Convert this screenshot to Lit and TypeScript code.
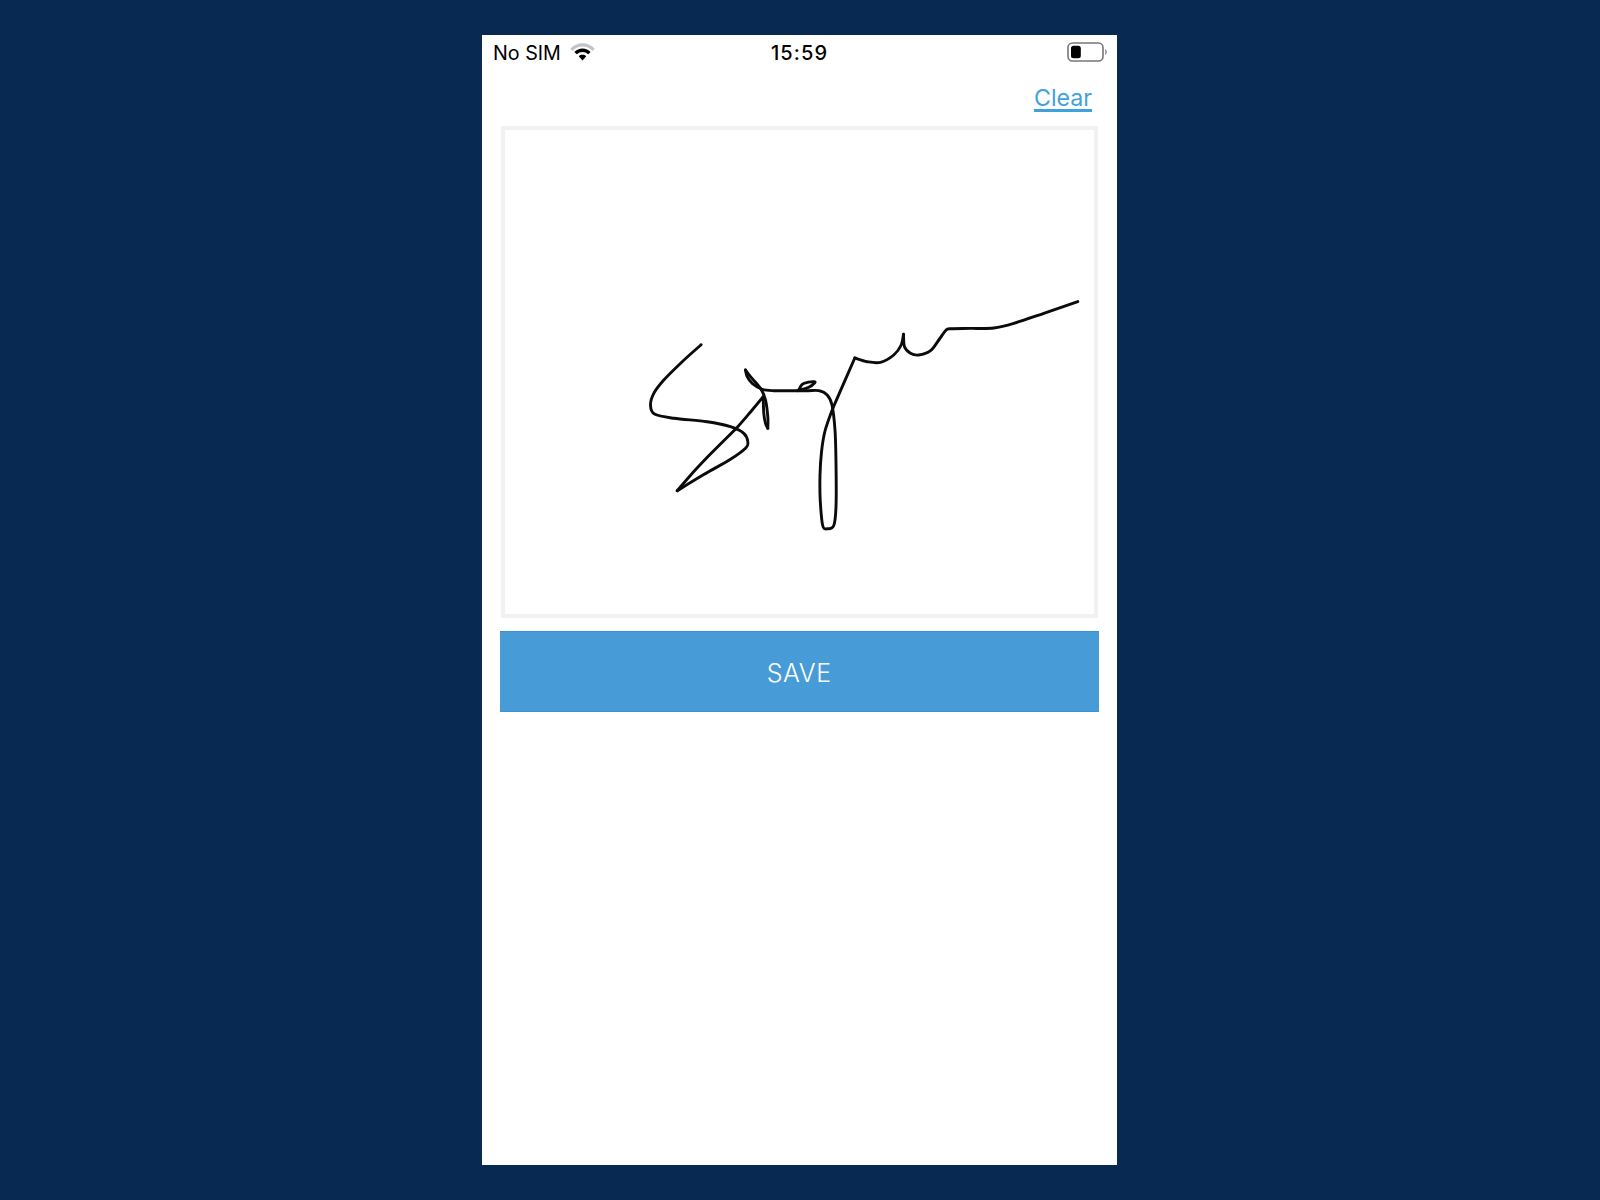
import { LitElement, html, css, svg } from "lit";
import { customElement } from "lit/decorators.js";

type P = [number, number];

const segments: P[][] = [
  [[700.7,344.7],[681.7,361.7],[663.3,380],[653.3,393.3],[650,405],[654,414],[673.3,418.3],[706.7,421.7],[730,426.7],[743.3,433.3],[747.3,441.7],[745,448.3],[730,459.3],[703.3,474.5],[676.7,490.7]],
  [[676.7,490.7],[692,473],[707,457],[722,442],[737,427],[750,412],[762.7,396.7]],
  [[762.7,396.7],[763.3,413.3],[765,423.3],[767.3,428.3]],
  [[767.3,428.3],[767.3,416.7],[765,400],[760,388.3],[750,376.7],[745,370]],
  [[745,370],[746.7,376.7],[751.7,383.3],[761.7,389.3],[773.3,390.7],[785,390.7],[797,390.7]],
  [[798.3,389.8],[801.7,384.3],[808,382.2],[813.3,381.7],[814.3,382.7],[808.3,387.3],[800,390]],
  [[797,390.7],[808,390.7],[818.3,390.7],[826.7,395],[831.5,405],[834.5,430],[835.5,463.3],[835.5,506.7],[833.3,525.5],[826.7,528.8],[822.2,525.5],[819.7,500],[819.5,475],[821,452],[824.5,431],[832.3,408.3]],
  [[832.3,408.3],[854.3,358]],
  [[854.3,358],[866.7,361.7],[880,362.3],[893.3,355],[900.7,345],[903,334.3]],
  [[903,334.3],[904,346.7],[910,353.3],[918.3,355],[930,350.7],[938.3,340],[945,330.7],[950,328.7],[970,328.4],[993.3,328],[1013.3,323.3],[1043.3,313.3],[1077.3,301.6]],
];

function spline(pts: P[]): string {
  let d = "";
  for (let i = 0; i < pts.length - 1; i++) {
    const p0 = pts[Math.max(i - 1, 0)];
    const p1 = pts[i];
    const p2 = pts[i + 1];
    const p3 = pts[Math.min(i + 2, pts.length - 1)];
    const c1: P = [p1[0] + (p2[0] - p0[0]) / 6, p1[1] + (p2[1] - p0[1]) / 6];
    const c2: P = [p2[0] - (p3[0] - p1[0]) / 6, p2[1] - (p3[1] - p1[1]) / 6];
    d += `${i === 0 ? `M${p1[0]} ${p1[1]}` : ""}C${c1[0].toFixed(1)} ${c1[1].toFixed(1)} ${c2[0].toFixed(1)} ${c2[1].toFixed(1)} ${p2[0]} ${p2[1]}`;
  }
  return d;
}

@customElement("app-root")
export class AppRoot extends LitElement {
  static styles = css`
    :host {
      display: flex;
      justify-content: flex-start;
      align-items: flex-start;
      height: 1200px;
      padding-left: 482px;
      box-sizing: border-box;
      background: #082a52;
      font-family: Inter, "Liberation Sans", Arial, sans-serif;
    }
    .phone {
      margin-top: 35px;
      width: 635px;
      height: 1130px;
      background: #fff;
      display: flex;
      flex-direction: column;
    }
    .status {
      height: 34px;
      display: grid;
      grid-template-columns: 1fr auto 1fr;
      align-items: center;
      padding: 1px 9px 0 11px;
      box-sizing: border-box;
      color: #000;
      font-size: 19.7px;
    }
    .left { display: flex; align-items: center; gap: 9px; }
    .wifi { width: 25px; height: 19px; display: block; margin-top: -1px; }
    .time { font-weight: 500; font-size: 20px; letter-spacing: 1.1px; margin-right: 2px; }
    .right { display: flex; justify-content: flex-end; margin-top: -1px; }
    .battery { width: 41px; height: 20px; display: block; }
    .bar {
      height: 57px;
      display: flex;
      justify-content: flex-end;
      align-items: center;
      padding: 0 25px 0 0;
      box-sizing: border-box;
    }
    .clear {
      color: #3fa2dd;
      font-size: 23.2px;
      text-decoration: underline;
      text-decoration-thickness: 2.5px;
      text-underline-offset: 3px;
    }
    .canvas {
      margin: 0 19px;
      height: 492px;
      box-sizing: border-box;
      border: 4px solid #f0f1f1;
      background: #fff;
    }
    .sig { display: block; width: 100%; height: 100%; }
    .sig path { fill: none; stroke: #0b0b0b; stroke-width: 2.9; stroke-linecap: round; stroke-linejoin: round; }
    .save {
      margin: 13px 18.5px 0 18px;
      height: 81px;
      display: flex;
      align-items: center;
      justify-content: center;
      padding-top: 2px;
      background: #479cd8;
      border-top: 1px solid #3a92d4;
      border-bottom: 1px solid #3a92d4;
      box-sizing: border-box;
      color: #fff;
      font-size: 25px;
      font-weight: 300;
      letter-spacing: 0.6px;
    }
  `;

  render() {
    return html`
      <div class="phone">
        <div class="status">
          <div class="left">
            <span>No SIM</span>
            <svg class="wifi" viewBox="0 0 25 19">
              <path d="M1.4 6.8C4.4 3.6 8.2 1.8 12.5 1.8S20.6 3.6 23.6 6.8" fill="none" stroke="#c4c4c4" stroke-width="3.2"/>
              <path d="M5.6 10.2C7.4 8.3 9.8 7.2 12.5 7.2S17.6 8.3 19.4 10.2" fill="none" stroke="#000" stroke-width="3.4"/>
              <path d="M8.8 13.2C9.8 12.3 11.1 11.8 12.5 11.8S15.2 12.3 16.2 13.2L12.5 17.4Z" fill="#000"/>
            </svg>
          </div>
          <div class="time">15:59</div>
          <div class="right">
            <svg class="battery" viewBox="0 0 41 20">
              <rect x="1" y="1" width="35" height="18" rx="4.5" fill="#fff" stroke="#777" stroke-width="1.6"/>
              <rect x="4" y="3.8" width="9.8" height="12.4" rx="2.5" fill="#000"/>
              <path d="M38.5 7.5C39.7 8.2 39.7 11.8 38.5 12.5Z" fill="#999" stroke="#999" stroke-width="0.8"/>
            </svg>
          </div>
        </div>
        <div class="bar"><span class="clear">Clear</span></div>
        <div class="canvas">
          <svg class="sig" viewBox="505 130 588 484">
            ${segments.map((s) => svg`<path d=${spline(s)}></path>`)}
          </svg>
        </div>
        <div class="save">SAVE</div>
      </div>
    `;
  }
}
